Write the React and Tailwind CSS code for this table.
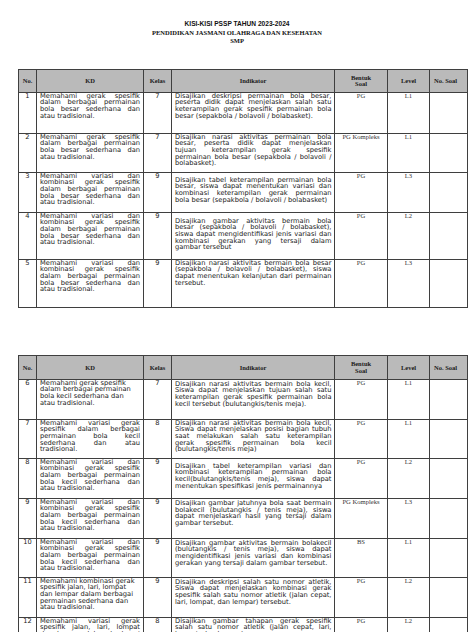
import React from "react";

const GRID = "grid grid-cols-[18px_107px_28px_163px_53px_42px_38px]";
const CELL = "border-r border-b border-[#3f3f3f] overflow-visible";
const BODY = "font-['DejaVu_Sans',sans-serif] text-[6.7px] leading-[6.67px] text-[#222]";
const SERIF = "font-['Liberation_Serif',serif] text-[6.6px] leading-[6.67px] text-[#333]";

function JLine({ text }) {
  const words = text.split(/\s+/);
  return (
    <div className="flex justify-between whitespace-nowrap">
      {words.map((w, i) => (
        <span key={i}>
          {w}
          {i < words.length - 1 ? " " : ""}
        </span>
      ))}
    </div>
  );
}

function Lines({ lines, just, lastJust }) {
  return (
    <div className="-mt-[0.5px]">
      {lines.map((l, i) => {
        const isLast = i === lines.length - 1;
        if (just && (!isLast || lastJust)) return <JLine key={i} text={l} />;
        return (
          <div key={i} className="whitespace-nowrap">
            {l}
          </div>
        );
      })}
    </div>
  );
}

function Header({ h }) {
  const hc =
    "bg-[#bababa] font-['Liberation_Serif',serif] font-bold text-[6.5px] leading-[6.2px] text-[#1a1a1a] flex items-center";
  return (
    <div className={GRID} style={{ height: h }}>
      <div className={`${CELL} ${hc} justify-center`}>No.</div>
      <div className={`${CELL} ${hc} justify-center`}>KD</div>
      <div className={`${CELL} ${hc} justify-center`}>Kelas</div>
      <div className={`${CELL} ${hc} justify-center`}>Indikator</div>
      <div className={`${CELL} ${hc} justify-center text-center`}>
        Bentuk
        <br />
        Soal
      </div>
      <div className={`${CELL} ${hc} justify-center`}>Level</div>
      <div className={`${CELL} ${hc} justify-start pl-[4px]`}>No. Soal</div>
    </div>
  );
}

function Row({ r }) {
  return (
    <div className={GRID} style={{ height: r.h }}>
      <div className={`${CELL} ${BODY} text-center`}>
        <div className="-mt-[0.5px]">{r.no}</div>
      </div>
      <div className={`${CELL} ${BODY} pl-[3px] pr-[3px]`}>
        <Lines lines={r.kd} just={r.kdJust} />
      </div>
      <div className={`${CELL} ${BODY} text-center`}>
        <div className="-mt-[0.5px]">{r.kelas}</div>
      </div>
      <div className={`${CELL} ${BODY} pl-[3px] pr-[2.5px]`} style={{ paddingTop: r.indPt || 0 }}>
        <Lines lines={r.ind} just={true} lastJust={r.indLastJust} />
      </div>
      <div className={`${CELL} ${SERIF} text-center`}>
        <div>{r.bentuk}</div>
      </div>
      <div className={`${CELL} ${SERIF} text-center`}>
        <div>{r.level}</div>
      </div>
      <div className={CELL}></div>
    </div>
  );
}

function Table({ headerH, rows, className }) {
  return (
    <div className={`ml-[18px] w-[450px] border-l border-t border-[#3f3f3f] ${className}`}>
      <Header h={headerH} />
      {rows.map((r) => (
        <Row key={r.no} r={r} />
      ))}
    </div>
  );
}

const KD_BESAR_1 = [
  "Memahami gerak spesifik",
  "dalam berbagai permainan",
  "bola besar sederhana dan",
  "atau tradisional.",
];
const KD_BESAR_2 = [
  "Memahami variasi dan",
  "kombinasi gerak spesifik",
  "dalam berbagai permainan",
  "bola besar sederhana dan",
  "atau tradisional.",
];
const KD_KECIL_2 = [
  "Memahami variasi dan",
  "kombinasi gerak spesifik",
  "dalam berbagai permainan",
  "bola kecil sederhana dan",
  "atau tradisional.",
];

const ROWS1 = [
  {
    no: "1",
    h: 41,
    kd: KD_BESAR_1,
    kdJust: true,
    kelas: "7",
    ind: [
      "Disajikan deskripsi permainan bola besar,",
      "peserta didik dapat menjelaskan  salah satu",
      "keterampilan gerak spesifik permainan bola",
      "besar (sepakbola / bolavoli / bolabasket).",
    ],
    bentuk: "PG",
    level: "L1",
  },
  {
    no: "2",
    h: 39,
    kd: KD_BESAR_1,
    kdJust: true,
    kelas: "7",
    ind: [
      "Disajikan narasi aktivitas permainan bola",
      "besar, peserta didik dapat menjelaskan",
      "tujuan keterampilan gerak spesifik",
      "permainan bola besar (sepakbola / bolavoli /",
      "bolabasket).",
    ],
    bentuk: "PG Kompleks",
    level: "L1",
  },
  {
    no: "3",
    h: 40,
    kd: KD_BESAR_2,
    kdJust: true,
    kelas: "9",
    indPt: 4,
    ind: [
      "Disajikan tabel keterampilan permainan bola",
      "besar, siswa dapat menentukan variasi dan",
      "kombinasi keterampilan gerak permainan",
      "bola besar (sepakbola / bolavoli / bolabasket)",
    ],
    bentuk: "PG",
    level: "L3",
  },
  {
    no: "4",
    h: 47,
    kd: KD_BESAR_2,
    kdJust: true,
    kelas: "9",
    indPt: 5,
    ind: [
      "Disajikan gambar aktivitas bermain bola",
      "besar (sepakbola / bolavoli / bolabasket),",
      "siswa dapat mengidentifikasi jenis variasi dan",
      "kombinasi gerakan yang tersaji dalam",
      "gambar tersebut",
    ],
    bentuk: "PG",
    level: "L2",
  },
  {
    no: "5",
    h: 48,
    kd: KD_BESAR_2,
    kdJust: true,
    kelas: "9",
    ind: [
      "Disajikan narasi aktivitas bermain bola besar",
      "(sepakbola / bolavoli / bolabasket), siswa",
      "dapat menentukan kelanjutan dari permainan",
      "tersebut.",
    ],
    bentuk: "PG",
    level: "L3",
  },
];

const ROWS2 = [
  {
    no: "6",
    h: 40,
    kd: [
      "Memahami gerak spesifik",
      "dalam berbagai permainan",
      "bola kecil sederhana dan",
      "atau tradisional.",
    ],
    kdJust: false,
    kelas: "7",
    indPt: 1,
    ind: [
      "Disajikan narasi aktivitas bermain bola kecil,",
      "Siswa dapat menjelaskan tujuan  salah satu",
      "keterampilan gerak spesifik permainan bola",
      "kecil tersebut (bulutangkis/tenis meja).",
    ],
    bentuk: "PG",
    level: "L1",
  },
  {
    no: "7",
    h: 39,
    kd: [
      "Memahami variasi gerak",
      "spesifik dalam berbagai",
      "permainan bola kecil",
      "sederhana dan atau",
      "tradisional.",
    ],
    kdJust: true,
    kelas: "8",
    ind: [
      "Disajikan narasi aktivitas bermain bola kecil,",
      "Siswa dapat menjelaskan posisi bagian tubuh",
      "saat melakukan salah satu keterampilan",
      "gerak spesifik permainan bola kecil",
      "(bulutangkis/tenis meja)",
    ],
    bentuk: "PG",
    level: "L1",
  },
  {
    no: "8",
    h: 40,
    kd: KD_KECIL_2,
    kdJust: true,
    kelas: "9",
    indPt: 4,
    ind: [
      "Disajikan tabel keterampilan variasi dan",
      "kombinasi keterampilan permainan bola",
      "kecil(bulutangkis/tenis meja), siswa dapat",
      "menentukan spesifikasi jenis permainannya",
    ],
    bentuk: "PG",
    level: "L2",
  },
  {
    no: "9",
    h: 40,
    kd: KD_KECIL_2,
    kdJust: true,
    kelas: "9",
    indPt: 1.5,
    ind: [
      "Disajikan gambar jatuhnya bola saat bermain",
      "bolakecil (bulutangkis / tenis meja), siswa",
      "dapat menjelaskan hasil  yang tersaji dalam",
      "gambar tersebut.",
    ],
    bentuk: "PG Kompleks",
    level: "L3",
  },
  {
    no: "10",
    h: 39,
    kd: KD_KECIL_2,
    kdJust: true,
    kelas: "9",
    indPt: 1,
    ind: [
      "Disajikan gambar aktivitas bermain bolakecil",
      "(bulutangkis / tenis meja), siswa dapat",
      "mengidentifikasi jenis variasi dan kombinasi",
      "gerakan yang tersaji dalam gambar tersebut.",
    ],
    bentuk: "BS",
    level: "L1",
  },
  {
    no: "11",
    h: 40,
    kd: [
      "Memahami kombinasi gerak",
      "spesifik jalan, lari, lompat",
      "dan lempar dalam berbagai",
      "permainan sederhana dan",
      "atau tradisional.",
    ],
    kdJust: false,
    kelas: "9",
    indPt: 1,
    ind: [
      "Disajikan deskripsi salah satu nomor atletik,",
      "Siswa dapat menjelaskan kombinasi gerak",
      "spesifik salah satu nomor atletik (jalan cepat,",
      "lari, lompat, dan lempar) tersebut.",
    ],
    bentuk: "PG",
    level: "L2",
  },
  {
    no: "12",
    h: 40,
    kd: [
      "Memahami variasi gerak",
      "spesifik jalan, lari, lompat",
      "dan lempar dalam berbagai",
      "permainan sederhana dan",
      "atau tradisional.",
    ],
    kdJust: true,
    kelas: "8",
    ind: [
      "Disajikan gambar tahapan gerak spesifik",
      "salah satu nomor atletik (jalan cepat, lari,",
      "lompat, dan lempar).",
    ],
    bentuk: "PG",
    level: "L2",
  },
];

export default function App() {
  return (
    <div className="w-[474px] h-[632px] overflow-hidden bg-white">
      <div className="pt-[20px] text-center text-[#111] leading-[8.7px]">
        <div className="font-['Liberation_Sans',Arial,sans-serif] font-bold text-[6.6px]">
          KISI-KISI PSSP TAHUN 2023-2024
        </div>
        <div className="font-['Liberation_Serif',serif] font-bold text-[6.5px]">
          PENDIDIKAN JASMANI OLAHRAGA DAN KESEHATAN
        </div>
        <div className="font-['Liberation_Serif',serif] font-bold text-[6.5px]">SMP</div>
      </div>
      <Table className="mt-[23px]" headerH={23} rows={ROWS1} />
      <Table className="mt-[47px]" headerH={24} rows={ROWS2} />
    </div>
  );
}
